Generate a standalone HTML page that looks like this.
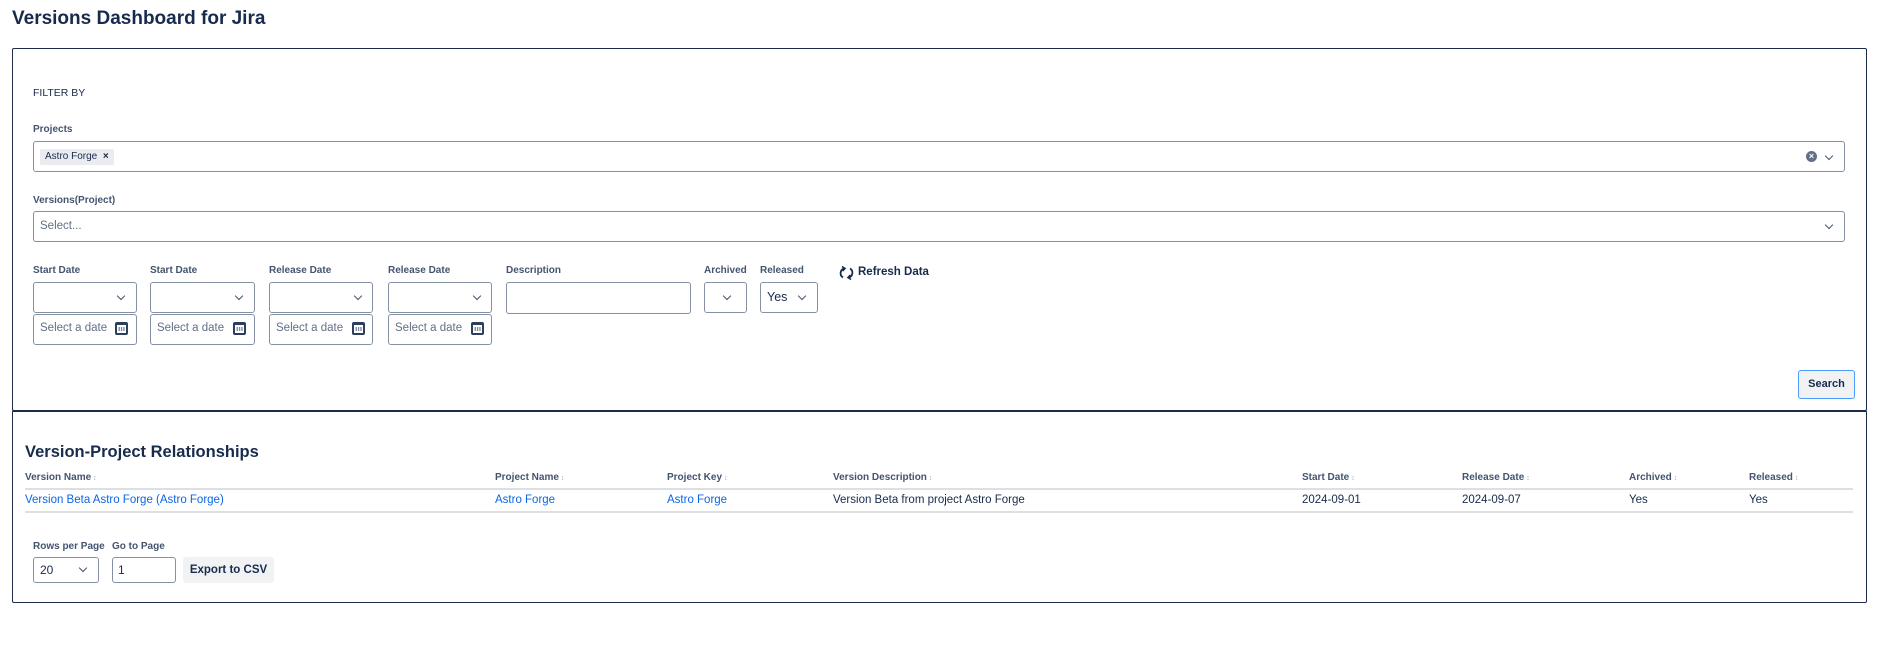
<!DOCTYPE html>
<html><head><meta charset="utf-8"><style>
*{box-sizing:border-box;margin:0;padding:0}
body{width:1889px;height:661px;background:#fff;font-family:"Liberation Sans",sans-serif;color:#172b4d;position:relative;overflow:hidden}
.a{position:absolute}
.box{position:absolute;border:1px solid #1d2b4d;border-radius:2px}
.lbl{position:absolute;font-size:10px;font-weight:bold;color:#44546f}
.inp{position:absolute;border:1px solid #8590a2;border-radius:3px;background:#fff}
.chev{position:absolute;width:6px;height:6px;border-right:1.6px solid #44546f;border-bottom:1.6px solid #44546f;transform:rotate(45deg)}
.ph{position:absolute;font-size:11.5px;color:#626f86}
.th{position:absolute;top:472px;font-size:10px;font-weight:bold;color:#44546f}
.th:after{content:"\2195";font-size:7px;color:#aab;margin-left:2px}
.td{position:absolute;top:494px;font-size:11.5px;color:#172b4d}
.lnk{color:#0c66e4}
.cal{position:absolute;width:13px;height:13px;border:2px solid #2c3e5d;border-top-width:3px;border-radius:2px}
.cal:after{content:"";position:absolute;left:1px;top:2px;width:7px;height:4px;background:radial-gradient(circle,#2c3e5d 0.7px,transparent 0.8px) 0 0/2.4px 2px}
</style></head><body>
<div class="a" style="left:12px;top:8px;font-size:19px;font-weight:bold;color:#172b4d">Versions Dashboard for Jira</div>

<div class="box" style="left:12px;top:48px;width:1855px;height:363px"></div>
<div class="box" style="left:12px;top:410px;width:1855px;height:193px;border-top:2px solid #1d2b4d"></div>

<div class="a" style="left:33px;top:87px;font-size:10.5px;color:#172b4d">FILTER BY</div>

<div class="lbl" style="left:33px;top:124px">Projects</div>
<div class="inp" style="left:33px;top:141px;width:1812px;height:31px"></div>
<div class="a" style="left:40px;top:149px;height:16px;padding:0 5px;background:#ebecf0;border-radius:2px;font-size:10px;line-height:16px;color:#172b4d">Astro Forge &nbsp;<b>×</b></div>
<div class="a" style="left:1806px;top:151px;width:11px;height:11px;border-radius:50%;background:#626f86;color:#fff;font-size:9px;line-height:11px;text-align:center;font-weight:bold">×</div>
<div class="chev" style="left:1826px;top:153px"></div>

<div class="lbl" style="left:33px;top:195px">Versions(Project)</div>
<div class="inp" style="left:33px;top:211px;width:1812px;height:31px"></div>
<div class="ph" style="left:40px;top:220px">Select...</div>
<div class="chev" style="left:1826px;top:222px"></div>

<div class="lbl" style="left:33px;top:265px">Start Date</div>
<div class="lbl" style="left:150px;top:265px">Start Date</div>
<div class="lbl" style="left:269px;top:265px">Release Date</div>
<div class="lbl" style="left:388px;top:265px">Release Date</div>
<div class="lbl" style="left:506px;top:265px">Description</div>
<div class="lbl" style="left:704px;top:265px">Archived</div>
<div class="lbl" style="left:760px;top:265px">Released</div>

<div class="inp" style="left:33px;top:282px;width:104px;height:31px"></div><div class="chev" style="left:118px;top:293px"></div>
<div class="inp" style="left:150px;top:282px;width:105px;height:31px"></div><div class="chev" style="left:236px;top:293px"></div>
<div class="inp" style="left:269px;top:282px;width:104px;height:31px"></div><div class="chev" style="left:355px;top:293px"></div>
<div class="inp" style="left:388px;top:282px;width:104px;height:31px"></div><div class="chev" style="left:474px;top:293px"></div>
<div class="inp" style="left:506px;top:282px;width:185px;height:32px"></div>
<div class="inp" style="left:704px;top:282px;width:43px;height:31px"></div><div class="chev" style="left:724px;top:293px"></div>
<div class="inp" style="left:760px;top:282px;width:58px;height:31px"></div><div class="a" style="left:767px;top:290px;font-size:12.5px">Yes</div><div class="chev" style="left:799px;top:293px"></div>

<div class="inp" style="left:33px;top:314px;width:104px;height:31px"></div><div class="ph" style="left:40px;top:322px">Select a date</div><div class="cal" style="left:115px;top:322px"></div>
<div class="inp" style="left:150px;top:314px;width:105px;height:31px"></div><div class="ph" style="left:157px;top:322px">Select a date</div><div class="cal" style="left:233px;top:322px"></div>
<div class="inp" style="left:269px;top:314px;width:104px;height:31px"></div><div class="ph" style="left:276px;top:322px">Select a date</div><div class="cal" style="left:352px;top:322px"></div>
<div class="inp" style="left:388px;top:314px;width:104px;height:31px"></div><div class="ph" style="left:395px;top:322px">Select a date</div><div class="cal" style="left:471px;top:322px"></div>

<svg class="a" style="left:839px;top:265px" width="15" height="16" viewBox="0 0 15 16"><path d="M5 3.5A5 5 0 0 0 4 12.5M10 12.5A5 5 0 0 0 11 3.5" fill="none" stroke="#172b4d" stroke-width="1.8"/><path d="M3 1.5L6 3.5 3.5 6M12 14.5L9 12.5 11.5 10" fill="none" stroke="#172b4d" stroke-width="1.6"/></svg>
<div class="a" style="left:858px;top:266px;font-size:11.5px;font-weight:bold;color:#172b4d">Refresh Data</div>

<div class="a" style="left:1798px;top:370px;width:57px;height:29px;border:1.5px solid #4c9aff;border-radius:3px;background:#f1f2f4;font-size:11px;font-weight:bold;line-height:26px;text-align:center">Search</div>

<div class="a" style="left:25px;top:443px;font-size:16.5px;font-weight:bold;color:#172b4d">Version-Project Relationships</div>
<div class="th" style="left:25px">Version Name</div>
<div class="th" style="left:495px">Project Name</div>
<div class="th" style="left:667px">Project Key</div>
<div class="th" style="left:833px">Version Description</div>
<div class="th" style="left:1302px">Start Date</div>
<div class="th" style="left:1462px">Release Date</div>
<div class="th" style="left:1629px">Archived</div>
<div class="th" style="left:1749px">Released</div>
<div class="a" style="left:25px;top:488px;width:1828px;height:2px;background:#dcdfe4"></div>
<div class="td lnk" style="left:25px">Version Beta Astro Forge (Astro Forge)</div>
<div class="td lnk" style="left:495px">Astro Forge</div>
<div class="td lnk" style="left:667px">Astro Forge</div>
<div class="td" style="left:833px">Version Beta from project Astro Forge</div>
<div class="td" style="left:1302px">2024-09-01</div>
<div class="td" style="left:1462px">2024-09-07</div>
<div class="td" style="left:1629px">Yes</div>
<div class="td" style="left:1749px">Yes</div>
<div class="a" style="left:25px;top:511px;width:1828px;height:2px;background:#dcdfe4"></div>

<div class="lbl" style="left:33px;top:541px">Rows per Page</div>
<div class="lbl" style="left:112px;top:541px">Go to Page</div>
<div class="inp" style="left:33px;top:557px;width:66px;height:26px"></div><div class="a" style="left:40px;top:563px;font-size:12px">20</div><div class="chev" style="left:80px;top:565px"></div>
<div class="inp" style="left:112px;top:557px;width:64px;height:26px"></div><div class="a" style="left:118px;top:563px;font-size:12px">1</div>
<div class="a" style="left:183px;top:557px;width:91px;height:26px;background:#f1f2f4;border-radius:3px;font-size:11.5px;font-weight:bold;line-height:26px;text-align:center">Export to CSV</div>
</body></html>
